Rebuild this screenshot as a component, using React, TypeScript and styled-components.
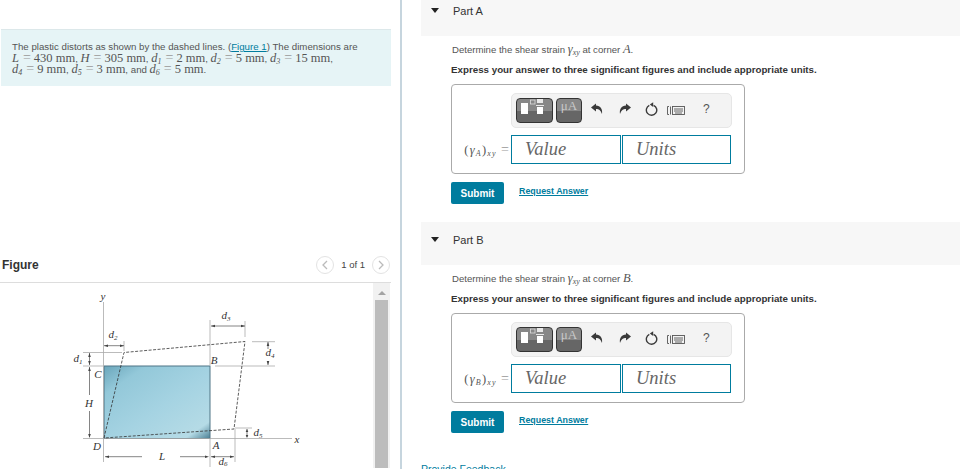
import React from 'react';
import styled, { createGlobalStyle } from 'styled-components';

const GlobalStyle = createGlobalStyle`
  html, body {
    margin: 0;
    padding: 0;
    background: #fff;
    overflow: hidden;
  }
  body {
    font-family: "Liberation Sans", Arial, sans-serif;
    color: #333;
  }
`;

const Page = styled.div`
  display: flex;
  width: 960px;
  height: 469px;
  overflow: hidden;
`;

const LeftPane = styled.div`
  width: 391px;
  flex: none;
  padding-top: 29px;
  margin-right: 9px;
`;

const Intro = styled.div`
  height: 57px;
  box-sizing: border-box;
  margin-left: 1px;
  padding: 11px 10px 0 11px;
  background: #e6f4f6;
  border-top: 1px solid #dce8ea;
  font-size: 9.7px;
  line-height: 11.6px;
  color: #555;
  white-space: nowrap;
`;

const Link = styled.a`
  color: #007c9e;
  text-decoration: underline;
`;

const M = styled.span`
  font-family: "Liberation Serif", "Times New Roman", serif;
  font-style: italic;
  font-size: 12.5px;
`;

const N = styled.span`
  font-family: "Liberation Serif", "Times New Roman", serif;
  font-size: 12.5px;
`;

const Eq = styled.span`
  margin: 0 3px 0 4px;
  font-size: 14px;
  line-height: 0;
  color: #999;
`;

const Sub = styled.span`
  font-size: 8px;
  line-height: 0;
  vertical-align: -2px;
`;

const FigureHeader = styled.div`
  display: flex;
  align-items: center;
  justify-content: space-between;
  height: 27px;
  box-sizing: border-box;
  margin-top: 170px;
  padding: 0 1px 9px 2px;
  border-bottom: 1px solid #ddd;
`;

const FigureTitle = styled.div`
  font-size: 12px;
  font-weight: bold;
  color: #333;
`;

const Pager = styled.div`
  display: flex;
  align-items: center;
  gap: 7px;
  font-size: 9.5px;
  color: #444;
`;

const PageButton = styled.span`
  display: flex;
  align-items: center;
  justify-content: center;
  width: 18px;
  height: 18px;
  box-sizing: border-box;
  border: 1px solid #e3e3e3;
  border-radius: 50%;
`;

const FigureBody = styled.div`
  display: flex;
  height: 185px;
`;

const FigureSvg = styled.svg`
  display: block;
  width: 373px;
  height: 185px;
  flex: none;
`;

const Scrollbar = styled.div`
  width: 17px;
  background: #f1f1f1;
  display: flex;
  flex-direction: column;
  align-items: center;
  padding-top: 8px;
  box-sizing: border-box;
`;

const ScrollArrow = styled.div`
  width: 0;
  height: 0;
  border-left: 4px solid transparent;
  border-right: 4px solid transparent;
  border-bottom: 4px solid #a3a3a3;
`;

const ScrollThumb = styled.div`
  width: 13px;
  flex: 1;
  margin-top: 5px;
  background: #bcbcbc;
`;

const RightPane = styled.div`
  flex: 1;
  border-left: 2px solid #c6d5de;
  padding-left: 19px;
`;

const PartHeader = styled.div<{ $clipped?: boolean }>`
  display: flex;
  align-items: flex-start;
  height: ${p => (p.$clipped ? 36 : 43)}px;
  box-sizing: border-box;
  padding-top: ${p => (p.$clipped ? 4 : 11)}px;
  background: #f7f7f7;
  font-size: 11px;
  line-height: 14px;
  color: #333;
`;

const Caret = styled.span`
  width: 0;
  height: 0;
  margin: 4px 14px 0 10px;
  border-left: 4px solid transparent;
  border-right: 4px solid transparent;
  border-top: 5px solid #222;
`;

const PartBody = styled.div`
  padding-left: 30px;
  height: 186px;
`;

const Question = styled.div`
  padding: 6px 0 0 1px;
  height: 21px;
  font-size: 9.6px;
  line-height: 14px;
  color: #555;
`;

const Instruction = styled.div`
  height: 14px;
  font-size: 9.77px;
  line-height: 13px;
  font-weight: bold;
  color: #333;
  white-space: nowrap;
`;

const AnswerBox = styled.div`
  width: 294px;
  height: 90px;
  box-sizing: border-box;
  margin-top: 7px;
  padding: 8px 12px 0 0;
  border: 1px solid #aaa;
  border-radius: 4px;
  display: flex;
  flex-direction: column;
  align-items: flex-end;
`;

const Toolbar = styled.div`
  width: 221px;
  height: 35px;
  box-sizing: border-box;
  padding: 4px;
  display: flex;
  align-items: center;
  background: #f3f3f3;
  border: 1px solid #e6e6e6;
  border-radius: 5px;
`;

const ToolButton = styled.div<{ $wide?: boolean }>`
  width: ${p => (p.$wide ? 37 : 26)}px;
  height: 25px;
  margin-right: 3px;
  box-sizing: border-box;
  flex: none;
  border: 1px solid #333;
  border-radius: 4px;
  background: linear-gradient(#878787 0 52%, #666 52% 100%);
  color: #c9c9c9;
  font-family: "Liberation Serif", serif;
  font-size: 13px;
  line-height: 14px;
  text-align: center;
  overflow: hidden;
`;

const ToolIcon = styled.svg<{ $gap: number, $low?: boolean }>`
  margin: 0 0 ${p => (p.$low ? 0 : 4)}px ${p => p.$gap}px;
  flex: none;
  display: block;
`;

const Help = styled.span`
  margin: 0 0 4px 18px;
  font-size: 12px;
  color: #555;
`;

const InputRow = styled.div`
  display: flex;
  align-items: center;
  margin-top: 7px;
  margin-right: 1px;
`;

const Label = styled.div`
  width: 59px;
  padding-right: 2px;
  box-sizing: border-box;
  text-align: right;
  font-family: "Liberation Serif", serif;
  font-size: 12.5px;
  letter-spacing: 1.2px;
  color: #555;
  white-space: nowrap;
`;

const LabelEq = styled.span`
  font-size: 14px;
  letter-spacing: 0;
  color: #999;
`;

const Field = styled.div<{ $units?: boolean }>`
  width: ${p => (p.$units ? 109 : 110)}px;
  height: 29px;
  margin-right: ${p => (p.$units ? 0 : 1)}px;
  box-sizing: border-box;
  padding-left: 13px;
  border: 1px solid #007c9e;
  font-family: "Liberation Serif", serif;
  font-style: italic;
  font-size: 18.5px;
  line-height: 26px;
  color: #666;
`;

const Actions = styled.div`
  display: flex;
  align-items: center;
  margin-top: 8px;
`;

const Submit = styled.button`
  width: 53px;
  height: 22px;
  padding: 0;
  border: 0;
  border-radius: 2px;
  background: #007c9e;
  color: #fff;
  font-family: "Liberation Sans", Arial, sans-serif;
  font-size: 10px;
  font-weight: bold;
`;

const RequestLink = styled(Link)`
  margin: 0 0 4px 15px;
  font-size: 8.9px;
  font-weight: bold;
`;

const Feedback = styled(Link)`
  display: block;
  margin-top: 12px;
  font-size: 10.5px;
  line-height: 13px;
  text-decoration: none;
  white-space: nowrap;
`;

const GlyphText = styled.text`
  font-family: "Liberation Serif", serif;
  font-style: italic;
  font-size: 11px;
  fill: #333;
  text-anchor: middle;
`;

const AnswerTools = () => (
  <Toolbar>
    <ToolButton $wide>
      <svg width="35" height="23" viewBox="517 99 35 23">
        <rect x="521" y="103" width="7" height="11" fill="#fff" />
        <rect x="530.5" y="100" width="4.5" height="4" fill="none" stroke="#ddd" strokeWidth="0.8" />
        <rect x="537" y="99" width="6" height="4" fill="#e8e8e8" />
        <rect x="536" y="105" width="8" height="1" fill="#e8e8e8" />
        <rect x="537" y="107" width="6" height="7" fill="#fff" />
      </svg>
    </ToolButton>
    <ToolButton>μA</ToolButton>
    <ToolIcon $gap={6} width="12" height="12" viewBox="0 0 12 12">
      <path d="M5 .5 0 4.500 5 8.500V6c3 0 4.500 1 6 5 .8-5-1.500-8.400-6-8.500z" fill="#3a3a3a" />
    </ToolIcon>
    <ToolIcon $gap={16} width="12" height="12" viewBox="0 0 12 12">
      <path d="M7 .5 12 4.500 7 8.500V6c-3 0-4.500 1-6 5-.8-5 1.500-8.400 6-8.500z" fill="#3a3a3a" />
    </ToolIcon>
    <ToolIcon $gap={14} width="13" height="14" viewBox="0 0 13 14" fill="none">
      <path d="M4.300 3.400a5.200 5.200 0 1 0 4.300-.1" stroke="#3a3a3a" strokeWidth="1.400" />
      <path d="M8.200 0.200v4.800L4.800 2.400z" fill="#3a3a3a" />
    </ToolIcon>
    <ToolIcon $low $gap={9} width="18" height="9" viewBox="0 0 18 9" fill="none" stroke="#555" strokeWidth="0.9">
      <path d="M2 .5H.5v8H2M3.500 .5v8" />
      <rect x="5.500" y=".5" width="12" height="8" />
      <path d="M7 3h9M7 5h9M8 7h7" />
    </ToolIcon>
    <Help>?</Help>
  </Toolbar>
);

const Part = ({ name, corner, clipped }: { name: string, corner: string, clipped?: boolean }) => (
  <>
    <PartHeader $clipped={clipped}>
      <Caret />
      {name}
    </PartHeader>
    <PartBody>
      <Question>
        Determine the shear strain <M>γ<Sub>xy</Sub></M> at corner <M>{corner}</M>.
      </Question>
      <Instruction>Express your answer to three significant figures and include appropriate units.</Instruction>
      <AnswerBox>
        <AnswerTools />
        <InputRow>
          <Label>(<i>γ<Sub>{corner}</Sub></i>)<i><Sub>xy</Sub></i> <LabelEq>=</LabelEq></Label>
          <Field>Value</Field>
          <Field $units>Units</Field>
        </InputRow>
      </AnswerBox>
      <Actions>
        <Submit>Submit</Submit>
        <RequestLink>Request Answer</RequestLink>
      </Actions>
    </PartBody>
  </>
);

const Dim = ({ label, value }: { label: React.ReactNode, value: string }) => (
  <>
    {label}<N><Eq>=</Eq>{value} mm</N>
  </>
);

// drawing is in page coordinates, the viewBox starts where the figure panel starts
const Diagram = () => (
  <FigureSvg viewBox="0 284 373 185">
    <defs>
      <linearGradient id="plate" x1="0" y1="0" x2="1" y2="1">
        <stop offset="0" stopColor="#6aa6bb" />
        <stop offset="0.2" stopColor="#93c8d9" />
        <stop offset="0.55" stopColor="#a5d3e2" />
        <stop offset="0.88" stopColor="#b5dbe6" />
        <stop offset="1" stopColor="#4b7f94" />
      </linearGradient>
    </defs>
    <rect x="104" y="367" width="106" height="72.500" fill="url(#plate)" stroke="#4f7485" strokeWidth="1" />
    <g stroke="#aaa" strokeWidth="0.8" fill="none">
      <path d="M103.500 303V463M83 439.500H292" />
      <path d="M210 321V366M245 322V338M124 342V352M83 353.500H122M83 367H103" />
      <path d="M215 367H275M252 342.700H275M235 430V463M210 440V468M235 429H252" />
    </g>
    <g stroke="#666" strokeWidth="0.8" fill="none">
      <path d="M89.500 354V366M89.500 368V396M89.500 412V438" />
      <path d="M104 346.700H124M211 327H245" />
      <path d="M268 343V350M268 362V366M247 430V438" />
      <path d="M105 457.700H142M180 457.700H207M211 457.700H234" />
    </g>
    <g fill="#444">
      <path d="M104 346.700l4-1.300v2.600zM124 346.700l-4-1.300v2.600zM211 327l4-1.300v2.600zM245 327l-4-1.300v2.600z" />
      <path d="M89.500 354l-1.300 4h2.600zM89.500 366l-1.300-4h2.600zM89.500 368l-1.300 4h2.600zM89.500 439l-1.300-4h2.600z" />
      <path d="M268 343l-1.300 4h2.600zM268 366l-1.300-4h2.600zM247 430l-1.300 3h2.600zM247 439l-1.300-3h2.600z" />
      <path d="M105 457.700l4-1.300v2.600zM209 457.700l-4-1.300v2.600zM211 457.700l4-1.300v2.600zM234 457.700l-4-1.300v2.600z" />
    </g>
    <path d="M104 439 124 353.500 245 342.500 234 430Z" fill="none" stroke="#333" strokeWidth="0.8" strokeDasharray="3 1.500" />
    <GlyphText x="103" y="301">y</GlyphText>
    <GlyphText x="226" y="320">d<tspan fontSize="7" dy="2">3</tspan></GlyphText>
    <GlyphText x="113" y="339">d<tspan fontSize="7" dy="2">2</tspan></GlyphText>
    <GlyphText x="270" y="357">d<tspan fontSize="7" dy="2">4</tspan></GlyphText>
    <GlyphText x="78" y="363">d<tspan fontSize="7" dy="2">1</tspan></GlyphText>
    <GlyphText x="214" y="365">B</GlyphText>
    <GlyphText x="98" y="379">C</GlyphText>
    <GlyphText x="89" y="408">H</GlyphText>
    <GlyphText x="97" y="451">D</GlyphText>
    <GlyphText x="216" y="450">A</GlyphText>
    <GlyphText x="258" y="437">d<tspan fontSize="7" dy="2">5</tspan></GlyphText>
    <GlyphText x="297" y="444">x</GlyphText>
    <GlyphText x="162" y="461">L</GlyphText>
    <GlyphText x="223" y="466">d<tspan fontSize="7" dy="1">6</tspan></GlyphText>
  </FigureSvg>
);

const App = () => (
  <Page>
    <GlobalStyle />
    <LeftPane>
      <Intro>
        The plastic distorts as shown by the dashed lines. (<Link>Figure 1</Link>) The dimensions are<br />
        <Dim label={<M>L</M>} value="430" />, <Dim label={<M>H</M>} value="305" />, <Dim label={<M>d<Sub>1</Sub></M>} value="2" />, <Dim label={<M>d<Sub>2</Sub></M>} value="5" />, <Dim label={<M>d<Sub>3</Sub></M>} value="15" />,<br />
        <Dim label={<M>d<Sub>4</Sub></M>} value="9" />, <Dim label={<M>d<Sub>5</Sub></M>} value="3" />, and <Dim label={<M>d<Sub>6</Sub></M>} value="5" />.
      </Intro>
      <FigureHeader>
        <FigureTitle>Figure</FigureTitle>
        <Pager>
          <PageButton>
            <svg width="6" height="10" viewBox="0 0 6 10" fill="none" stroke="#bbb" strokeWidth="1.300"><path d="M5 1 1 5l4 4" /></svg>
          </PageButton>
          1 of 1
          <PageButton>
            <svg width="6" height="10" viewBox="0 0 6 10" fill="none" stroke="#bbb" strokeWidth="1.300"><path d="M1 1l4 4-4 4" /></svg>
          </PageButton>
        </Pager>
      </FigureHeader>
      <FigureBody>
        <Diagram />
        <Scrollbar>
          <ScrollArrow />
          <ScrollThumb />
        </Scrollbar>
      </FigureBody>
    </LeftPane>
    <RightPane>
      <Part name="Part A" corner="A" clipped />
      <Part name="Part B" corner="B" />
      <Feedback>Provide Feedback</Feedback>
    </RightPane>
  </Page>
);

export default App;
